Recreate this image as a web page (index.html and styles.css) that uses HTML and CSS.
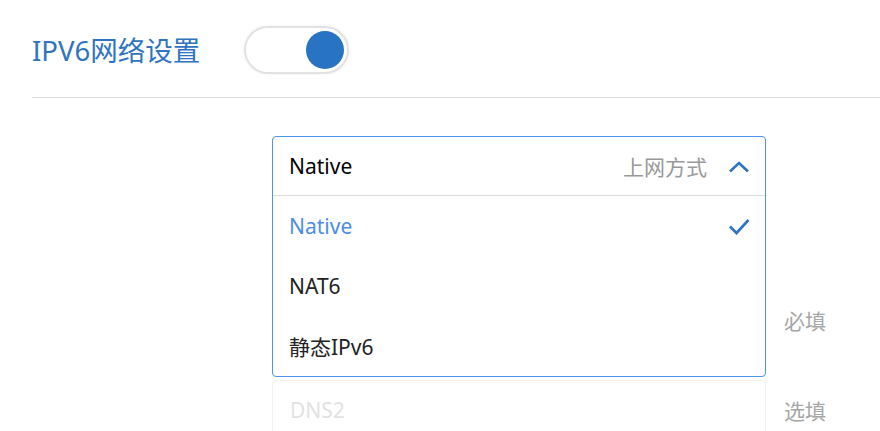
FILE: index.html
```html
<!DOCTYPE html>
<html lang="zh-CN">
<head>
  <meta charset="UTF-8" />
  <title>IPV6网络设置</title>
  <link rel="stylesheet" href="styles.css">
</head>
<body>

<div class="header">
  <h2 class="title">IPV6网络设置</h2>
  <div class="switch on"><div class="knob"></div></div>
</div>

<div class="form">
  <div class="row select-row">
    <div class="field">
      <div class="dropdown">
        <div class="dd-head">
          <span class="dd-value">Native</span>
          <span class="dd-label">上网方式</span>
          <svg class="chev" width="22" height="13" viewBox="0 0 22 13"><path d="M2 11.5 L11 3 L20 11.5" fill="none" stroke="#2f74c0" stroke-width="2.6"/></svg>
        </div>
        <div class="dd-opt active">
          <span>Native</span>
          <svg class="check" width="22" height="17" viewBox="0 0 22 17"><path d="M2 8.5 L8.5 15 L20.5 2" fill="none" stroke="#2f74c0" stroke-width="2.6"/></svg>
        </div>
        <div class="dd-opt"><span>NAT6</span></div>
        <div class="dd-opt"><span>静态IPv6</span></div>
      </div>
    </div>
    <span class="hint"></span>
  </div>

  <div class="row first-input">
    <div class="field input"><span class="ph">IPv6地址</span></div>
    <span class="hint">必填</span>
  </div>

  <div class="row">
    <div class="field input"><span class="ph">DNS2</span></div>
    <span class="hint">选填</span>
  </div>
</div>

</body>
</html>
```

FILE: styles.css
```css
body {
  margin: 0;
  background: #fff;
  font-family: "Noto Sans", "Noto Sans CJK SC", sans-serif;
  color: #222;
  overflow: hidden;
}
.header {
  display: flex;
  align-items: center;
  height: 97px;
  margin-left: 32px;
  border-bottom: 1px solid #dcdcdc;
}
.title {
  margin: 0 44px 0 0;
  font-size: 27.5px;
  font-weight: normal;
  color: #2f74c0;
}
.switch {
  width: 98px;
  height: 44px;
  border: 2px solid #e2e2e2;
  border-radius: 26px;
  box-shadow: 0 0 3px rgba(0,0,0,0.08);
  display: flex;
  align-items: center;
  justify-content: flex-end;
  padding-right: 3px;
  box-sizing: content-box;
  margin-top: 2px;
}
.knob {
  width: 38px;
  height: 38px;
  border-radius: 50%;
  background: #2873c2;
}

.form {
  padding: 38px 0 0 272px;
}
.row {
  display: flex;
  align-items: center;
  height: 60px;
  margin-bottom: 30px;
}
.select-row {
  margin-bottom: 94px;
}
.field {
  width: 494px;
  height: 60px;
  box-sizing: border-box;
  position: relative;
}
.hint {
  margin-left: 18px;
  font-size: 21px;
  color: #a6a6a6;
}
.input {
  border: 1px solid #f2f2f2;
  border-radius: 4px;
  display: flex;
  align-items: center;
  padding-left: 17px;
}
.ph {
  font-size: 21px;
  color: #e2e2e2;
}

.dropdown {
  position: absolute;
  top: 0;
  left: 0;
  right: 0;
  z-index: 10;
  background: #fff;
  border: 1px solid #4d94ee;
  border-radius: 4px;
}
.dd-head {
  display: flex;
  align-items: center;
  height: 58px;
  padding: 0 15px 0 16px;
  border-bottom: 1px solid #dcdcdc;
}
.dd-value {
  flex: 1;
  font-size: 21px;
  color: #000;
}
.dd-label {
  font-size: 21px;
  color: #999;
  margin-right: 21px;
}
.chev {
  display: block;
}
.dd-opt {
  display: flex;
  align-items: center;
  justify-content: space-between;
  height: 60px;
  padding: 0 15px 0 16px;
  font-size: 21px;
  color: #222;
}
.dd-opt.active {
  color: #4a8ee6;
}
.check {
  display: block;
}
```
